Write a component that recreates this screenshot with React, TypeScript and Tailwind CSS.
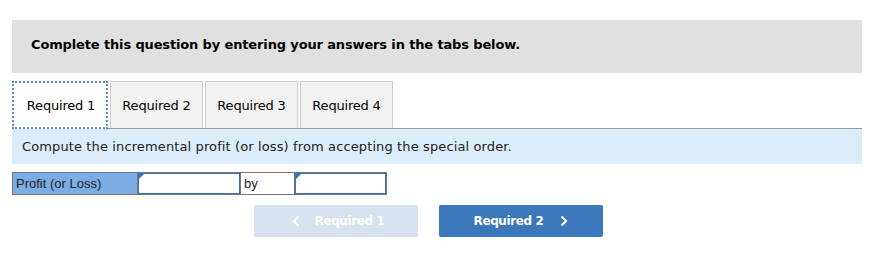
import React from "react";

const V = { fontFamily: '"DejaVu Sans", Verdana, sans-serif' };
const A = { fontFamily: '"Liberation Sans", Arial, sans-serif' };

function Chev({ dir }: { dir: "l" | "r" }) {
  return (
    <svg width="9" height="12" viewBox="0 0 9 12" className="block">
      <path
        d={dir === "l" ? "M6.5 1.5 L2 6 L6.5 10.5" : "M2.5 1.5 L7 6 L2.5 10.5"}
        fill="none"
        stroke="white"
        strokeWidth="2.2"
      />
    </svg>
  );
}

function Corner() {
  return (
    <span className="absolute left-0 top-0 w-0 h-0 border-t-[7px] border-t-[#3a74b8] border-r-[7px] border-r-transparent" />
  );
}

export default function App() {
  const tabs = ["Required 1", "Required 2", "Required 3", "Required 4"];
  return (
    <div className="w-[886px] h-[262px] bg-white pt-5 pl-3" style={V}>
      <div className="w-[850px]">
        <div className="h-[53px] bg-[#e0e0e0] flex items-center pl-[19px] pb-[4px]">
          <span className="text-[13px] font-bold text-black tracking-[-0.14px]">
            Complete this question by entering your answers in the tabs below.
          </span>
        </div>
        <div className="mt-2 flex items-end gap-[2px] border-b border-[#999] h-[48px]">
          <div className="w-[96px] h-[48px] -mb-[1px] bg-white border-2 border-dotted border-[#5a8fd0] flex items-center justify-center text-[13px] text-black relative z-10 tracking-[-0.2px] pl-[2px] pt-[2px]">
            {tabs[0]}
          </div>
          {tabs.slice(1).map((t) => (
            <div
              key={t}
              className="w-[93px] h-[47px] bg-[#f2f2f2] border border-b-0 border-[#cccccc] flex items-center justify-center text-[13px] text-black tracking-[-0.2px] pt-[2px]"
            >
              {t}
            </div>
          ))}
        </div>
        <div className="h-[35px] bg-[#dbedfa] flex items-center pl-[10px] pt-[1px] text-[13px] text-[#222] tracking-[0.12px]">
          Compute the incremental profit (or loss) from accepting the special order.
        </div>
        <div className="mt-2 flex h-[23px] text-[13px] text-[#222]" style={A}>
          <div className="w-[126px] h-full bg-[#7badE4] border border-[#767676] flex items-center pl-[3px]">
            Profit (or Loss)
          </div>
          <div className="relative w-[103px] h-full bg-white border-y border-r border-[#767676]">
            <div className="absolute inset-0 border border-[#3a6fb0]" />
            <Corner />
          </div>
          <div className="w-[54px] h-full bg-white border-y border-r border-[#767676] flex items-center pl-[3px]">
            by
          </div>
          <div className="relative w-[92px] h-full bg-white border-y border-r border-[#767676]">
            <div className="absolute inset-0 border border-[#3a6fb0]" />
            <Corner />
          </div>
        </div>
        <div className="mt-[10px] flex gap-[21px] pl-[242px]">
          <div className="w-[164px] h-[32px] rounded-[2px] bg-[#d6e2ef] flex items-center justify-center gap-[14px] text-[12px] font-bold text-white tracking-[-0.4px] pl-[4px]">
            <Chev dir="l" />
            <span>Required 1</span>
          </div>
          <div className="w-[164px] h-[32px] rounded-[2px] bg-[#3a77bb] flex items-center justify-center gap-[16px] text-[12px] font-bold text-white tracking-[-0.4px]">
            <span>Required 2</span>
            <Chev dir="r" />
          </div>
        </div>
      </div>
    </div>
  );
}
